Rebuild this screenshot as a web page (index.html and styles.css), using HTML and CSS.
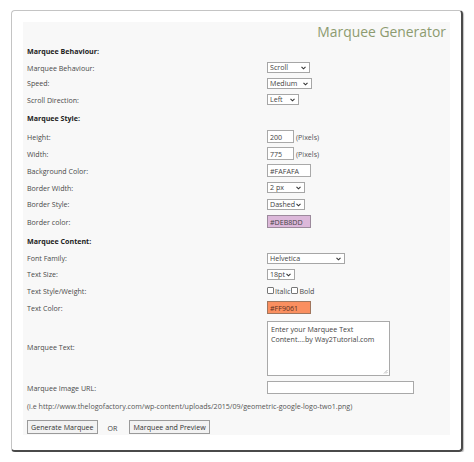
FILE: index.html
```html
<!DOCTYPE html>
<html>
<head>
<meta charset="utf-8">
<link rel="stylesheet" href="styles.css">
</head>
<body>
<div class="frame">
  <div class="panel">
    <div class="title">Marquee Generator</div>

    <div class="row sec h18">Marquee Behaviour:</div>
    <div class="row h15"><span class="lbl">Marquee Behaviour:</span><span class="sel w43">Scroll<svg class="chev" viewBox="0 0 6 4"><path d="M0.6 0.6 L3 3 L5.4 0.6"/></svg></span></div>
    <div class="row h16"><span class="lbl">Speed:</span><span class="sel w45">Medium<svg class="chev" viewBox="0 0 6 4"><path d="M0.6 0.6 L3 3 L5.4 0.6"/></svg></span></div>
    <div class="row h17"><span class="lbl">Scroll Direction:</span><span class="sel w32">Left<svg class="chev" viewBox="0 0 6 4"><path d="M0.6 0.6 L3 3 L5.4 0.6"/></svg></span></div>

    <div class="row sec h20">Marquee Style:</div>
    <div class="row h17"><span class="lbl">Height:</span><span class="inp w27">200</span><span class="unit">(Pixels)</span></div>
    <div class="row h17"><span class="lbl">Width:</span><span class="inp w27">775</span><span class="unit">(Pixels)</span></div>
    <div class="row h17"><span class="lbl">Background Color:</span><span class="inp w44">#FAFAFA</span></div>
    <div class="row h17"><span class="lbl">Border Width:</span><span class="sel w37">2 px<svg class="chev" viewBox="0 0 6 4"><path d="M0.6 0.6 L3 3 L5.4 0.6"/></svg></span></div>
    <div class="row h16"><span class="lbl">Border Style:</span><span class="sel w37">Dashed<svg class="chev" viewBox="0 0 6 4"><path d="M0.6 0.6 L3 3 L5.4 0.6"/></svg></span></div>
    <div class="row h19"><span class="lbl">Border color:</span><span class="inp w44 pink">#DEB8DD</span></div>

    <div class="row sec h19">Marquee Content:</div>
    <div class="row h16"><span class="lbl">Font Family:</span><span class="sel w78">Helvetica<svg class="chev" viewBox="0 0 6 4"><path d="M0.6 0.6 L3 3 L5.4 0.6"/></svg></span></div>
    <div class="row h16"><span class="lbl">Text Size:</span><span class="sel w28">18pt<svg class="chev" viewBox="0 0 6 4"><path d="M0.6 0.6 L3 3 L5.4 0.6"/></svg></span></div>
    <div class="row h17"><span class="lbl">Text Style/Weight:</span><span class="checks"><span class="cb"></span>Italic <span class="cb"></span>Bold</span></div>
    <div class="row h17"><span class="lbl">Text Color:</span><span class="inp w44 orange">#FF9061</span></div>
    <div class="row h62"><span class="lbl">Marquee Text:</span><span class="area">Enter your Marquee Text Content....by Way2Tutorial.com<svg class="grip" viewBox="0 0 5 5"><path d="M4.5 1 L1 4.5 M4.5 3 L3 4.5"/></svg></span></div>
    <div class="row h19"><span class="lbl">Marquee Image URL:</span><span class="inp w147"></span></div>
    <div class="row h17 hint">(i.e http://www.thelogofactory.com/wp-content/uploads/2015/09/geometric-google-logo-two1.png)</div>
    <div class="row h21 btns"><span class="btn">Generate Marquee</span><span class="or">OR</span><span class="btn">Marquee and Preview</span></div>
  </div>
</div>
</body>
</html>
```
FILE: styles.css
```css
html, body {
  margin: 0;
  padding: 0;
  background: #ffffff;
}
body {
  font-family: "Open Sans", "Liberation Sans", sans-serif;
  font-size: 7.1px;
  color: #4a4a4a;
}
.frame {
  margin: 10px 0 0 11px;
  width: 438px;
  padding: 11px 0 15px 11px;
  border: 1px solid #c4c4c4;
  border-right: 2px solid #4a4a4a;
  border-bottom: 2px solid #4a4a4a;
  border-radius: 4px;
  box-shadow: 1px 1px 1px rgba(0,0,0,0.25);
}
.panel {
  width: 419px;
  background: #f8f8f8;
  padding: 0 4px 0 4px;
}
.title {
  height: 20px;
  line-height: 20px;
  text-align: right;
  font-size: 13.9px;
  color: #8d9b70;
  padding-right: 0;
}
.row {
  display: flex;
  align-items: center;
}
.sec {
  font-weight: 700;
  color: #222;
}
.h15 { height: 15px; }
.h16 { height: 16px; }
.h17 { height: 17px; }
.h18 { height: 18px; }
.h19 { height: 19px; }
.h20 { height: 20px; }
.h21 { height: 21px; }
.h62 { height: 62px; }
.lbl {
  width: 240px;
  flex: none;
}
.sel {
  box-sizing: border-box;
  height: 11px;
  border: 1px solid #a6a6a6;
  background: #fff;
  display: flex;
  align-items: center;
  padding-left: 2px;
  position: relative;
  color: #444;
  line-height: 9px;
  white-space: nowrap;
}
.chev {
  position: absolute;
  right: 3px;
  top: 3px;
  width: 5px;
  height: 4px;
}
.chev path {
  fill: none;
  stroke: #333;
  stroke-width: 1.3;
}
.w43 { width: 43px; }
.w45 { width: 45px; }
.w32 { width: 32px; }
.w37 { width: 38px; }
.w78 { width: 78px; }
.w28 { width: 28px; }
.w27 { width: 27px; }
.w44 { width: 44px; }
.w147 { width: 147px; }
.inp {
  box-sizing: border-box;
  height: 13px;
  border: 1px solid #a9a9a9;
  background: #fff;
  display: flex;
  align-items: center;
  padding-left: 2px;
  color: #444;
}
.pink {
  background: #dcb8da;
  border-color: #9c8a9c;
}
.orange {
  background: #fa8f60;
  border-color: #a0765e;
  color: #5a3020;
}
.unit {
  margin-left: 2px;
  color: #555;
}
.checks {
  display: flex;
  align-items: center;
}
.cb {
  width: 5px;
  height: 5px;
  border: 1px solid #777;
  background: #fff;
  border-radius: 1px;
  display: inline-block;
  margin-right: 1px;
}
.checks .cb:nth-child(2) {
  margin-left: 1px;
}
.area {
  box-sizing: border-box;
  width: 123px;
  height: 55px;
  border: 1px solid #a9a9a9;
  background: #fff;
  align-self: center;
  padding: 2px 3px;
  line-height: 10px;
  position: relative;
  color: #444;
  margin-top: 2px;
}
.grip {
  position: absolute;
  right: 1px;
  bottom: 1px;
  width: 5px;
  height: 5px;
}
.grip path {
  stroke: #999;
  stroke-width: 0.7;
}
.hint {
  color: #555;
}
.btns {
  align-items: flex-start;
  padding-top: 6px;
  box-sizing: border-box;
}
.btn {
  box-sizing: border-box;
  height: 14px;
  border: 1px solid #9a9a9a;
  background: #f2f2f2;
  display: flex;
  align-items: center;
  padding: 0 3px;
  color: #333;
}
.or {
  margin: 3px 12px 0 10px;
  color: #444;
}
```
